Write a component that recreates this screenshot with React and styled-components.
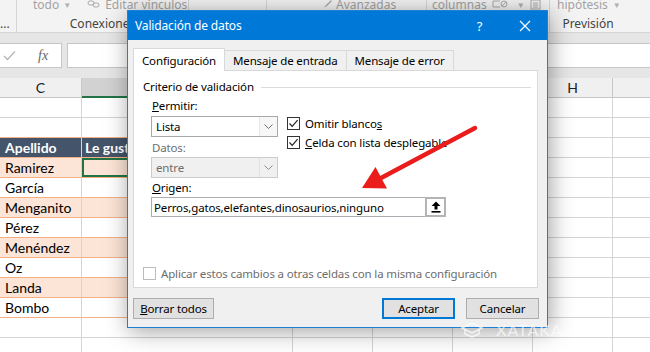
import React from 'react';
import styled, { createGlobalStyle } from 'styled-components';

const UI = `"Noto Sans", "Open Sans", sans-serif`;
const CELL = `Lato, "Noto Sans", sans-serif`;
const COLS = '82px 211px 80px 80px 80px 80px 80px';

const GlobalStyle = createGlobalStyle`
  html, body { margin: 0; padding: 0; background: #fff; overflow: hidden; }
  #root { width: 650px; height: 352px; }
`;

const Screen = styled.div`
  position: relative;
  width: 650px;
  height: 352px;
  overflow: hidden;
  background: #fff;
  display: flex;
  flex-direction: column;
`;

/* ---------- Ribbon ---------- */
const Ribbon = styled.div`
  height: 32px;
  flex: none;
  background: #f3f3f3;
  border-bottom: 1px solid #d5d5d5;
  display: flex;
  font-family: ${UI};
  font-size: 12px;
  overflow: hidden;
`;
const RibbonGroup = styled.div`
  width: ${p => p.$w}px;
  flex: none;
  border-right: ${p => (p.$last ? 'none' : '1px solid #d6d6d6')};
  box-sizing: border-box;
  display: flex;
  flex-direction: column;
  overflow: hidden;
`;
const GroupTop = styled.div`
  height: 16px;
  margin-top: -4px;
  padding-left: ${p => p.$pad || 0}px;
  display: flex;
  align-items: center;
  gap: ${p => p.$gap || 4}px;
  color: #a3a3a3;
  white-space: nowrap;
`;
const GroupLabel = styled.div`
  height: 16px;
  margin-top: 4px;
  line-height: 16px;
  text-align: ${p => p.$align || 'center'};
  padding-right: ${p => p.$pr || 0}px;
  color: #444;
  white-space: nowrap;
`;
const Caret = styled.span`
  font-size: 8px;
  color: #b0b0b0;
  margin-left: ${p => p.$ml || 0}px;
`;
const RibbonIcon = styled.svg`
  flex: none;
  margin-left: ${p => p.$ml || 0}px;
`;

/* ---------- Formula bar ---------- */
const FormulaBand = styled.div`
  height: 45px;
  flex: none;
  box-sizing: border-box;
  background: #e6e6e6;
  padding-top: 10px;
  display: flex;
  align-items: flex-start;
  gap: 5px;
`;
const FxBox = styled.div`
  width: 62px;
  height: 25px;
  box-sizing: border-box;
  background: #fff;
  border: 1px solid #c6c6c6;
  border-left: none;
  display: flex;
  align-items: center;
  padding-left: 3px;
  gap: 22px;
`;
const Fx = styled.span`
  font-family: "Liberation Serif", serif;
  font-style: italic;
  font-size: 14px;
  color: #666;
`;
const FormulaInput = styled.div`
  flex: 1;
  height: 25px;
  box-sizing: border-box;
  background: #fff;
  border: 1px solid #c6c6c6;
  border-right: none;
`;

/* ---------- Sheet ---------- */
const HeaderRow = styled.div`
  display: grid;
  grid-template-columns: ${COLS};
  height: 20px;
  flex: none;
`;
const ColHead = styled.div`
  box-sizing: border-box;
  background: ${p => (p.$sel ? '#d2d2d2' : '#f0f0f0')};
  border-right: 1px solid #c8c8c8;
  border-bottom: ${p => (p.$sel ? '2px solid #217346' : '1px solid #c6c6c6')};
  display: flex;
  align-items: center;
  justify-content: center;
  font-family: ${CELL};
  font-size: 14px;
  color: #222;
`;
const SheetRow = styled.div`
  display: grid;
  grid-template-columns: ${COLS};
  height: 20px;
  flex: none;
`;
const Cell = styled.div`
  box-sizing: border-box;
  min-width: 0;
  background: ${p => p.$bg || '#fff'};
  border-right: 1px solid #d4d4d4;
  border-bottom: 1px solid ${p => p.$line || '#d4d4d4'};
  padding-left: ${p => p.$pl ?? 5}px;
  display: flex;
  align-items: center;
  font-family: ${CELL};
  font-size: 14px;
  color: ${p => (p.$head ? '#fff' : '#000')};
  font-weight: ${p => (p.$head ? 700 : 400)};
  white-space: nowrap;
  overflow: hidden;
  ${p => p.$selected && 'box-shadow: inset 0 0 0 2px #217346;'}
`;

/* ---------- Dialog ---------- */
const Dialog = styled.div`
  position: absolute;
  left: 127px;
  top: 10px;
  width: 421px;
  height: 318px;
  box-sizing: border-box;
  background: #f0f0f0;
  border: 1px solid #1b80d6;
  box-shadow: 2px 3px 22px rgba(0, 0, 0, 0.38);
  display: flex;
  flex-direction: column;
  font-family: ${UI};
  font-size: 11.5px;
  letter-spacing: -0.15px;
  color: #000;
`;
const TitleBar = styled.div`
  height: 29px;
  flex: none;
  background: #0078d7;
  color: #fff;
  display: flex;
  align-items: center;
  padding-left: 7px;
`;
const Title = styled.div`
  flex: 1;
  font-size: 12px;
`;
const TitleBtn = styled.div`
  width: 45px;
  height: 29px;
  display: flex;
  align-items: center;
  justify-content: center;
  font-size: 13px;
`;
const DialogBody = styled.div`
  flex: 1;
  display: flex;
  flex-direction: column;
  padding: 8px 0 0 5px;
`;
const Tabs = styled.div`
  height: 22px;
  display: flex;
  align-items: flex-end;
`;
const Tab = styled.div`
  position: relative;
  z-index: ${p => (p.$active ? 2 : 1)};
  height: ${p => (p.$active ? 23 : 20)}px;
  margin-bottom: ${p => (p.$active ? -1 : 0)}px;
  margin-left: ${p => (p.$first ? 0 : -1)}px;
  box-sizing: border-box;
  padding: 0 8px;
  display: flex;
  align-items: center;
  background: ${p => (p.$active ? '#fff' : '#f0f0f0')};
  border: 1px solid #d9d9d9;
  border-bottom: none;
  white-space: nowrap;
`;
const Panel = styled.div`
  position: relative;
  width: 405px;
  height: 218px;
  box-sizing: border-box;
  background: #fff;
  border: 1px solid #d9d9d9;
  display: flex;
  flex-direction: column;
`;
const GroupHeader = styled.div`
  margin: 7px 6px 0 9px;
  height: 16px;
  display: flex;
  align-items: center;
  gap: 7px;
  white-space: nowrap;
`;
const GroupLine = styled.div`
  flex: 1;
  height: 1px;
  background: #dcdcdc;
  margin-top: 2px;
`;
const FormArea = styled.div`
  padding-left: 17px;
  display: flex;
  flex-direction: column;
`;
const Columns = styled.div`
  display: flex;
  gap: 9px;
`;
const LeftCol = styled.div`
  width: 127px;
  display: flex;
  flex-direction: column;
`;
const RightCol = styled.div`
  padding-top: 20px;
  display: flex;
  flex-direction: column;
`;
const FieldLabel = styled.div`
  height: 16px;
  line-height: 16px;
  margin-top: ${p => p.$mt || 0}px;
  padding-left: 1px;
  color: ${p => (p.$disabled ? '#6d6d6d' : '#000')};
`;
const Select = styled.div`
  height: 21px;
  margin-top: ${p => p.$mt || 0}px;
  box-sizing: border-box;
  border: 1px solid ${p => (p.$disabled ? '#cccccc' : '#a8a8a8')};
  background: ${p => (p.$disabled ? '#f0f0f0' : '#fff')};
  color: ${p => (p.$disabled ? '#6d6d6d' : '#000')};
  display: flex;
`;
const SelectValue = styled.div`
  flex: 1;
  padding-left: 4px;
  display: flex;
  align-items: center;
`;
const SelectArrow = styled.div`
  width: 17px;
  display: flex;
  align-items: center;
  justify-content: center;
  background: ${p => (p.$disabled ? '#f0f0f0' : '#f7f7f7')};
  border-left: 1px solid ${p => (p.$disabled ? '#e0e0e0' : '#e6e6e6')};
`;
const CheckRow = styled.div`
  height: 19px;
  display: flex;
  align-items: center;
  gap: 5px;
  white-space: nowrap;
  color: ${p => (p.$disabled ? '#6d6d6d' : '#000')};
`;
const Box = styled.div`
  width: 13px;
  height: 13px;
  box-sizing: border-box;
  border: 1px solid ${p => (p.$disabled ? '#bcbcbc' : '#333')};
  background: #fff;
  display: flex;
  align-items: center;
  justify-content: center;
  flex: none;
`;
const SourceField = styled.div`
  margin-top: 1px;
  width: 295px;
  height: 20px;
  box-sizing: border-box;
  border: 1px solid #abadb3;
  display: flex;
`;
const SourceText = styled.div`
  flex: 1;
  padding-left: 2px;
  display: flex;
  align-items: center;
  white-space: nowrap;
`;
const RefButton = styled.div`
  width: 21px;
  margin: -1px -1px -1px 0;
  box-sizing: border-box;
  border: 2px solid #b4b4b4;
  background: #fff;
  display: flex;
  align-items: center;
  justify-content: center;
`;
const ApplyRow = styled(CheckRow)`
  margin: auto 0 6px 9px;
  height: 16px;
`;
const Footer = styled.div`
  margin-top: 10px;
  padding-right: 8px;
  display: flex;
  gap: 11px;
`;
const Spacer = styled.div`
  flex: 1;
`;
const Button = styled.div`
  width: ${p => p.$w}px;
  height: 21px;
  box-sizing: border-box;
  background: #e1e1e1;
  border: ${p => (p.$default ? '2px solid #0078d7' : '1px solid #adadad')};
  display: flex;
  align-items: center;
  justify-content: center;
  white-space: nowrap;
`;

/* ---------- Overlays ---------- */
const ArrowMark = styled.svg`
  position: absolute;
  left: 355px;
  top: 120px;
`;
const Watermark = styled.div`
  position: absolute;
  left: 460px;
  top: 320px;
  display: flex;
  align-items: center;
  gap: 12px;
  color: rgba(255, 255, 255, 0.8);
  font-family: Lato, sans-serif;
  font-size: 16px;
  letter-spacing: 1px;
  opacity: 0.85;
`;

const Chevron = ({ color = '#707070' }) => (
  <svg width="9" height="5" viewBox="0 0 9 5">
    <path d="M0.5 0.5 L4.5 4.5 L8.5 0.5" fill="none" stroke={color} strokeWidth="1" />
  </svg>
);
const Check = () => (
  <svg width="11" height="11" viewBox="0 0 11 11">
    <path d="M1.5 5.5 L4.2 8.3 L9.6 2.2" fill="none" stroke="#222" strokeWidth="1.2" />
  </svg>
);

const people = ['Ramirez', 'García', 'Menganito', 'Pérez', 'Menéndez', 'Oz', 'Landa', 'Bombo'];
const PEACH = '#fce4d6';
const ORANGE = '#f4b084';

const PlainCells = ({ n }) => Array.from({ length: n }).map((_, i) => <Cell key={i} />);

export default function App() {
  return (
    <>
      <GlobalStyle />
      <Screen>
        <Ribbon>
          <RibbonGroup $w={17}>
            <GroupTop />
            <GroupLabel $align="left">...</GroupLabel>
          </RibbonGroup>
          <RibbonGroup $w={172}>
            <GroupTop $pad={16} $gap={4}>
              <span>todo</span>
              <Caret>▼</Caret>
              <RibbonIcon width="14" height="12" viewBox="0 0 14 12" $ml={12}>
                <rect x="1" y="3" width="6" height="4" rx="2" fill="none" stroke="#aaa" />
                <rect x="6" y="5" width="6" height="4" rx="2" fill="none" stroke="#aaa" />
              </RibbonIcon>
              <span>Editar vínculos</span>
            </GroupTop>
            <GroupLabel>Conexiones</GroupLabel>
          </RibbonGroup>
          <RibbonGroup $w={78}>
            <GroupTop />
          </RibbonGroup>
          <RibbonGroup $w={160}>
            <GroupTop $pad={56} $gap={3}>
              <RibbonIcon width="10" height="10" viewBox="0 0 10 10">
                <path d="M1 9 L3 6 L8 1 L9 2 L4 7 Z" fill="#aaa" />
              </RibbonIcon>
              <span>Avanzadas</span>
            </GroupTop>
          </RibbonGroup>
          <RibbonGroup $w={123}>
            <GroupTop $pad={5} $gap={5}>
              <span>columnas</span>
              <RibbonIcon width="16" height="8" viewBox="0 0 16 8">
                <path d="M1 1 H8 M1 1 V7 H8" fill="none" stroke="#aaa" />
                <circle cx="12" cy="4" r="3" fill="none" stroke="#aaa" />
                <path d="M10 6 L14 2" stroke="#aaa" />
              </RibbonIcon>
              <Caret $ml={4}>▼</Caret>
              <RibbonIcon width="11" height="11" viewBox="0 0 11 11">
                <rect x="1" y="1" width="9" height="9" fill="none" stroke="#aaa" />
                <path d="M3 4 H8 M3 6 H8 M3 8 H8" stroke="#aaa" />
              </RibbonIcon>
            </GroupTop>
          </RibbonGroup>
          <RibbonGroup $w={100} $last>
            <GroupTop $pad={7} $gap={5}>
              <span>hipótesis</span>
              <Caret>▼</Caret>
            </GroupTop>
            <GroupLabel $pr={24}>Previsión</GroupLabel>
          </RibbonGroup>
        </Ribbon>

        <FormulaBand>
          <FxBox>
            <svg width="13" height="11" viewBox="0 0 13 11">
              <path d="M1 6 L4.5 9.5 L12 1.5" fill="none" stroke="#b5b5b5" strokeWidth="1.3" />
            </svg>
            <Fx>fx</Fx>
          </FxBox>
          <FormulaInput />
        </FormulaBand>

        <HeaderRow>
          <ColHead>C</ColHead>
          <ColHead $sel>D</ColHead>
          <ColHead>E</ColHead>
          <ColHead>F</ColHead>
          <ColHead>G</ColHead>
          <ColHead>H</ColHead>
          <ColHead>I</ColHead>
        </HeaderRow>

        <SheetRow>
          <PlainCells n={7} />
        </SheetRow>
        <SheetRow>
          <Cell $line={ORANGE} />
          <Cell $line={ORANGE} />
          <PlainCells n={5} />
        </SheetRow>
        <SheetRow>
          <Cell $head $bg="#44546a" $line={ORANGE}>Apellido</Cell>
          <Cell $head $bg="#44546a" $line={ORANGE} $pl={3}>Le gusta</Cell>
          <PlainCells n={5} />
        </SheetRow>
        {people.map((name, i) => (
          <SheetRow key={name}>
            <Cell $bg={i % 2 === 0 ? PEACH : '#fff'} $line={ORANGE}>{name}</Cell>
            <Cell $bg={i % 2 === 0 ? PEACH : '#fff'} $line={ORANGE} $selected={i === 0} />
            <PlainCells n={5} />
          </SheetRow>
        ))}
        <SheetRow>
          <PlainCells n={7} />
        </SheetRow>
        <SheetRow>
          <PlainCells n={7} />
        </SheetRow>

        <Dialog>
          <TitleBar>
            <Title>Validación de datos</Title>
            <TitleBtn>?</TitleBtn>
            <TitleBtn>
              <svg width="12" height="12" viewBox="0 0 12 12">
                <path d="M1 1 L11 11 M11 1 L1 11" stroke="#fff" strokeWidth="1.2" />
              </svg>
            </TitleBtn>
          </TitleBar>
          <DialogBody>
            <Tabs>
              <Tab $active $first>Configuración</Tab>
              <Tab>Mensaje de entrada</Tab>
              <Tab>Mensaje de error</Tab>
            </Tabs>
            <Panel>
              <GroupHeader>
                <span>Criterio de validación</span>
                <GroupLine />
              </GroupHeader>
              <FormArea>
                <Columns>
                  <LeftCol>
                    <FieldLabel $mt={4}><u>P</u>ermitir:</FieldLabel>
                    <Select $mt={2}>
                      <SelectValue>Lista</SelectValue>
                      <SelectArrow><Chevron /></SelectArrow>
                    </Select>
                    <FieldLabel $mt={3} $disabled>Datos:</FieldLabel>
                    <Select $mt={1} $disabled>
                      <SelectValue>entre</SelectValue>
                      <SelectArrow $disabled><Chevron color="#8a8a8a" /></SelectArrow>
                    </Select>
                  </LeftCol>
                  <RightCol>
                    <CheckRow><Box><Check /></Box><span>Omitir blanco<u>s</u></span></CheckRow>
                    <CheckRow><Box><Check /></Box><span><u>C</u>elda con lista desplegable</span></CheckRow>
                  </RightCol>
                </Columns>
                <FieldLabel $mt={2}><u>O</u>rigen:</FieldLabel>
                <SourceField>
                  <SourceText>Perros,gatos,elefantes,dinosaurios,ninguno</SourceText>
                  <RefButton>
                    <svg width="10" height="12" viewBox="0 0 10 12">
                      <path d="M5 0.5 L9.5 5 L6.5 5 L6.5 8.5 L3.5 8.5 L3.5 5 L0.5 5 Z" fill="#000" />
                      <rect x="0.5" y="10" width="9" height="1.6" fill="#000" />
                    </svg>
                  </RefButton>
                </SourceField>
              </FormArea>
              <ApplyRow $disabled>
                <Box $disabled />
                <span>Aplicar estos cambios a otras celdas con la misma configuración</span>
              </ApplyRow>
            </Panel>
            <Footer>
              <Button $w={81}><span><u>B</u>orrar todos</span></Button>
              <Spacer />
              <Button $w={73} $default>Aceptar</Button>
              <Button $w={73}>Cancelar</Button>
            </Footer>
          </DialogBody>
        </Dialog>

        <ArrowMark width="130" height="75" viewBox="0 0 130 75">
          <line x1="120" y1="8" x2="26" y2="58" stroke="#ea1c1c" strokeWidth="4.5" strokeLinecap="round" />
          <polygon points="7,68 32,68.5 20.5,47" fill="#ea1c1c" />
        </ArrowMark>

        <Watermark>
          <svg width="24" height="16" viewBox="0 0 24 16">
            <path d="M2 6 L12 1 L22 6 L12 11 Z" fill="none" stroke="rgba(255,255,255,0.9)" strokeWidth="1.5" />
            <path d="M5 8 V12 L12 15 L19 12 V8" fill="none" stroke="rgba(255,255,255,0.9)" strokeWidth="1.5" />
          </svg>
          <span>XATAKA</span>
        </Watermark>
      </Screen>
    </>
  );
}
